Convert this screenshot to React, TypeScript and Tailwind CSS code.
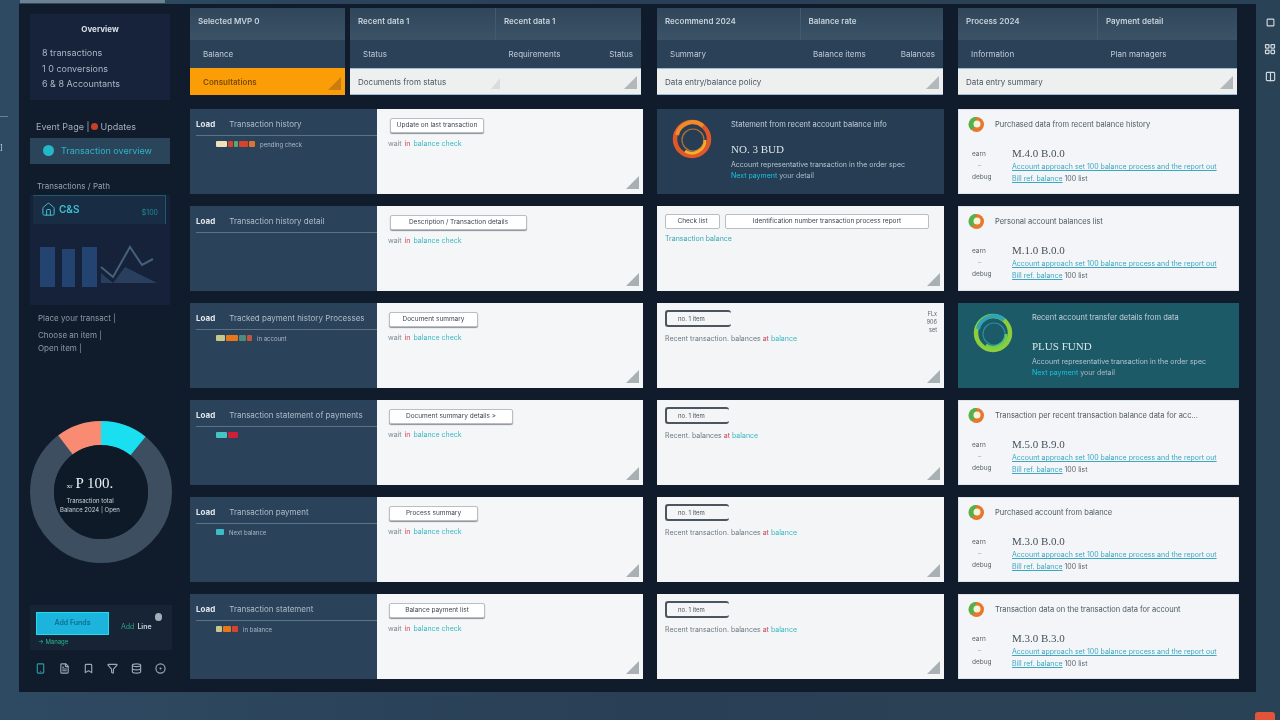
import React from "react";
import { Home, Smartphone, FileText, Bookmark, Filter, Database, CircleDot, Square, LayoutGrid, Columns2 } from "lucide-react";

const Corner = ({ c = "border-b-[#a9b0b4]" }: { c?: string }) => (
  <span className={`absolute right-[4px] bottom-[5px] w-0 h-0 border-l-[13px] border-l-transparent border-b-[13px] ${c}`} />
);

type HeadCell = { t: string; s: string[] };
const HeaderGroup = ({ cells, cls, foot, orange, mid }: { cells: HeadCell[]; cls: string; foot: string; orange?: boolean; mid?: boolean }) => (
  <div className={`${cls} flex flex-col`}>
    <div className="flex h-[32px] bg-gradient-to-b from-[#2f465b] to-[#3b5267]">
      {cells.map((c, i) => (
        <div key={i} className={`flex-1 pl-[8px] pt-[7px] text-[8px] font-semibold text-[#c8d2db] ${i > 0 ? "border-l border-[#445b6f]" : ""}`}>{c.t}</div>
      ))}
    </div>
    <div className="flex h-[28px] bg-[#2a4158]">
      {cells.map((c, i) => (
        <div key={i} className="flex-1 pl-[13px] pr-[8px] flex items-center justify-between text-[8px] text-[#c0ccd6]">
          {c.s.map((x, j) => <span key={j}>{x}</span>)}
        </div>
      ))}
    </div>
    <div className={`relative h-[27px] flex items-center pl-[8px] text-[8px] ${orange ? "bg-[#fb9d06] text-[#7c4a08] font-semibold pl-[13px]" : "bg-[#eef0f0] text-[#4b5560] border-y border-[#9fb8d4]"}`}>
      {foot}
      {mid && <span className="absolute left-[141px] bottom-[5px] w-0 h-0 border-l-[9px] border-l-transparent border-b-[11px] border-b-[#d9dcdc]" />}
      <Corner c={orange ? "border-b-[#c97c10]" : "border-b-[#b3b8ba]"} />
    </div>
  </div>
);

const chipsets = [
  ["bg-[#f0e2b8] w-[11px]", "bg-[#d8432e] w-[5px]", "bg-[#5aa77a] w-[4px]", "bg-[#d8432e] w-[9px]", "bg-[#e0722e] w-[6px]"],
  [],
  ["bg-[#c5c88a] w-[9px]", "bg-[#e8761a] w-[12px]", "bg-[#4d8a80] w-[7px]", "bg-[#c8553a] w-[5px]"],
  ["bg-[#45c4c4] w-[11px]", "bg-[#d01f3a] w-[10px]"],
  ["bg-[#3bbcc8] w-[8px]"],
  ["bg-[#c5c88a] w-[6px]", "bg-[#e8761a] w-[8px]", "bg-[#d8432e] w-[6px]"],
];

const rowsA = [
  { title: "Transaction history", chip: "Update on last transaction", w: "w-[94px]", ml: "ml-[13px]", tail: "pending check" },
  { title: "Transaction history detail", chip: "Description / Transaction details", w: "w-[137px]", ml: "ml-[13px]", tail: "" },
  { title: "Tracked payment history Processes", chip: "Document summary", w: "w-[89px]", ml: "ml-[12px]", tail: "in account" },
  { title: "Transaction statement of payments", chip: "Document summary details >", w: "w-[124px]", ml: "ml-[12px]", tail: "" },
  { title: "Transaction payment", chip: "Process summary", w: "w-[89px]", ml: "ml-[12px]", tail: "Next balance" },
  { title: "Transaction statement", chip: "Balance payment list", w: "w-[96px]", ml: "ml-[12px]", tail: "in balance" },
];

const CardA = ({ i }: { i: number }) => {
  const r = rowsA[i];
  return (
    <div className="flex h-[85px]">
      <div className="w-[187px] bg-[#2b435a] pl-[6px] pt-[10px] relative">
        <div className="flex text-[8px] leading-[10px] text-[#cfd8e0] whitespace-nowrap">
          <span className="font-bold mr-[14px] text-[#e2e8ee]">Load</span>
          <span className="text-[#aebcc8]">{r.title}</span>
        </div>
        <div className="h-px bg-[#5a7387] mt-[6px] mr-[-18px]" />
        <div className="flex items-center gap-[1px] pl-[20px] mt-[4px] h-[8px] text-[6px] text-[#a9b8c4]">
          {chipsets[i].map((c, j) => <span key={j} className={`h-[6px] rounded-[1px] ${c}`} />)}
          <span className="ml-[4px]">{r.tail}</span>
        </div>
      </div>
      <div className="flex-1 relative bg-[#f5f6f8] pt-[9px]">
        <div className={`${r.ml} ${r.w} h-[15px] flex items-center justify-center whitespace-nowrap bg-white border border-[#b9bec2] rounded-[2px] shadow-[0_1px_1px_#8a9298] text-[6.5px] text-[#3c4650]`}>{r.chip}</div>
        <div className="ml-[11px] mt-[7px] flex gap-[3px] text-[7px] leading-[8px]">
          <span className="text-[#7d8a90]">wait</span>
          <span className="text-[#d0405a]">in</span>
          <span className="text-[#39b8c4]">balance check</span>
        </div>
        <Corner />
      </div>
    </div>
  );
};

const RingLogo = ({ a, b, c, size = 42 }: { a: string; b: string; c: string; size?: number }) => (
  <svg width={size} height={size} viewBox="0 0 42 42" className="shrink-0">
    <circle cx="21" cy="21" r="17" fill="none" stroke={a} strokeWidth="4.5" />
    <path d="M6 17 A16 16 0 0 1 32 8" fill="none" stroke={b} strokeWidth="4" />
    <path d="M14 33 A13 13 0 0 0 34 22" fill="none" stroke={c} strokeWidth="3" />
    <circle cx="22" cy="22" r="11" fill="none" stroke={b} strokeWidth="1.2" opacity="0.7" />
  </svg>
);

const DarkFeature = ({ teal }: { teal?: boolean }) => (
  <div className={`h-[85px] flex pl-[14px] pr-[6px] pt-[6px] ${teal ? "bg-[#1c5a68]" : "bg-[#273d53]"}`}>
    <div className="mt-[3px] mr-[18px]">
      {teal ? <RingLogo a="#8ccf3c" b="#2fa3b8" c="#6fd04a" /> : <RingLogo a="#e2572a" b="#f08a2a" c="#f4b02c" />}
    </div>
    <div className="flex-1 min-w-0 whitespace-nowrap">
      <div className={`text-[7.5px] leading-[10px] text-[#c5d2dc] ${teal ? "mt-[4px]" : "mt-[5px]"}`}>{teal ? "Recent account transfer details from data" : "Statement from recent account balance info"}</div>
      <div className={`text-[11px] leading-[13px] text-[#dbe5ea] font-['Liberation_Serif',serif] ${teal ? "mt-[17px]" : "mt-[13px]"}`}>{teal ? "PLUS FUND" : "NO. 3 BUD"}</div>
      <div className="text-[7px] leading-[8px] text-[#b6c6d2] mt-[5px]">Account representative transaction in the order spec</div>
      <div className="text-[7px] leading-[8px] mt-[3px]"><span className="text-[#19c4dc]">Next payment </span><span className="text-[#a9bac6]">your detail</span></div>
    </div>
  </div>
);

const CardC = ({ title, value }: { title: string; value: string }) => (
  <div className="h-[85px] bg-[#f3f5f8] px-[9px] pt-[6px] border border-[#dfe4e8]">
    <div className="flex items-center gap-[10px] whitespace-nowrap">
      <svg width="17" height="17" viewBox="0 0 17 17" className="shrink-0">
        <circle cx="8.5" cy="8.5" r="7.5" fill="#e8762c" />
        <path d="M8.5 1 A7.5 7.5 0 0 0 3 14 L8 11 Z" fill="#58b04a" />
        <circle cx="9" cy="8" r="3.5" fill="#f8f2d8" />
      </svg>
      <span className="text-[7.5px] text-[#4d5862] overflow-hidden">{title}</span>
    </div>
    <div className="flex mt-[14px]">
      <div className="w-[44px] flex flex-col items-start pl-[4px] text-[6.5px] leading-[11.5px] text-[#5a656e]">
        <span className="mt-[2px]">earn</span>
        <span className="pl-[6px] text-[#9aa5ad]">–</span>
        <span>debug</span>
      </div>
      <div className="flex-1 min-w-0 whitespace-nowrap">
        <div className="text-[11px] leading-[13px] text-[#46525c] font-['Liberation_Serif',serif]">{value}</div>
        <div className="text-[7px] leading-[8px] text-[#3aa8c0] underline mt-[3px]">Account approach set 100 balance process and the report out</div>
        <div className="text-[7px] leading-[8px] mt-[4px]"><span className="text-[#3aa8c0] underline">Bill ref. balance</span><span className="text-[#5a656e]"> 100 list</span></div>
      </div>
    </div>
  </div>
);

const CardB = ({ right, w, line }: { right?: boolean; w: string; line: string }) => (
  <div className="h-[85px] relative bg-[#f3f5f6] pl-[8px] pt-[7px]">
    <div className={`${w} h-[17px] border-2 border-[#4c5660] rounded-[3px] border-r-0 flex items-center pl-[11px] text-[6px] text-[#4c5660]`}>no. 1 item</div>
    <div className="mt-[8px] text-[7px] leading-[8px] text-[#6c7a84]">{line} <span className="text-[#d0405a]">at</span> <span className="text-[#39b8c4]">balance</span></div>
    {right && (
      <div className="absolute right-[7px] top-[7px] text-[5.5px] leading-[8px] text-[#5a656e] text-right">
        <div>FLx</div><div>906</div><div>set</div>
      </div>
    )}
    <Corner />
  </div>
);

const Row2B = () => (
  <div className="h-[85px] relative bg-[#f3f5f6] pl-[8px] pt-[8px]">
    <div className="flex gap-[5px]">
      <div className="h-[15px] w-[55px] bg-white border border-[#b9bec2] rounded-[2px] flex items-center justify-center text-[6.5px] text-[#3c4650]">Check list</div>
      <div className="h-[15px] w-[204px] bg-white border border-[#b9bec2] rounded-[2px] flex items-center justify-center text-[6.5px] text-[#3c4650] whitespace-nowrap">Identification number transaction process report</div>
    </div>
    <div className="mt-[6px] text-[7px] leading-[8px] text-[#39a8b8]">Transaction balance</div>
    <Corner />
  </div>
);

const navIcons = [Smartphone, FileText, Bookmark, Filter, Database, CircleDot];

export default function App() {
  return (
    <div className="w-[1280px] h-[720px] overflow-hidden flex bg-gradient-to-r from-[#2e4a62] via-[#293f55] to-[#2a4256] font-['Inter',sans-serif] blur-[0.5px] relative">
      <span className="absolute left-[20px] top-0 w-[145px] h-[3px] bg-[#6c8292]" />
      <div className="w-[19px] shrink-0 flex flex-col text-[8px] text-[#8aa0b2] pt-[110px] gap-[19px]">
        <span>—</span>
        <span className="text-[#c8d3dc]">]</span>
      </div>

      <div className="w-[1237px] h-[688px] mt-[4px] bg-[#101c2b] flex shrink-0">
        {/* Sidebar */}
        <div className="w-[171px] shrink-0 pl-[11px] pr-[20px] pt-[10px] flex flex-col">
          <div className="w-[140px] h-[86px] bg-[#16233a] pt-[9px] text-[9px] text-[#aab7c4]">
            <div className="text-center font-bold text-[8px] text-[#d8e0e8]">Overview</div>
            <div className="pl-[12px] mt-[10px] leading-[15.5px] whitespace-nowrap">
              <div>8 transactions</div>
              <div>1 0 conversions</div>
              <div>6 & 8 Accountants</div>
            </div>
          </div>
          <div className="flex items-center mt-[20px] pl-[6px] text-[9px] text-[#a0aeba] whitespace-nowrap">
            Event Page | <span className="w-[7px] h-[7px] rounded-full bg-[#c8402a] mx-[2px]" />Updates
          </div>
          <div className="h-[26px] mt-[4px] bg-[#2a4559] flex items-center pl-[13px] gap-[7px] text-[9px] text-[#2fb4cc] whitespace-nowrap">
            <span className="w-[11px] h-[11px] rounded-full bg-[#23b8c8]" />Transaction overview
          </div>
          <div className="text-[8px] text-[#93a3b0] mt-[17px] pl-[7px] leading-[10px]">Transactions / Path</div>
          <div className="mt-[4px] h-[110px] bg-[#15223a] relative">
            <div className="ml-[3px] w-[133px] h-[29px] bg-[#182c44] border-t border-r border-[#1d5a6c] flex items-center justify-between pl-[8px] pr-[7px] text-[#3fc0d0]">
              <span className="flex items-center gap-[3px] text-[10px] font-semibold"><Home size={15} strokeWidth={1.6} />C&S</span>
              <span className="text-[7px] text-[#1f8c9c] mt-[8px]">$100</span>
            </div>
            <div className="flex items-end mt-[21px] pl-[10px]">
              <span className="w-[15px] h-[40px] bg-[#234470]" />
              <span className="w-[13px] h-[38px] bg-[#234470] ml-[7px]" />
              <span className="w-[15px] h-[40px] bg-[#234470] ml-[7px]" />
              <svg width="60" height="42" viewBox="0 0 60 42" className="ml-[2px]">
                <path d="M2 28 L14 38 L26 22 L58 38 L2 38 Z" fill="#2a3f5e" />
                <path d="M2 22 L14 32 L31 2 L43 20 L54 14" fill="none" stroke="#46607c" strokeWidth="2" />
              </svg>
            </div>
          </div>
          <div className="pl-[8px] mt-[7px] text-[8px] text-[#8c9aa8] whitespace-nowrap">
            <div>Place your transact |</div>
            <div className="mt-[5px] leading-[13px]">Choose an item |<br />Open item |</div>
          </div>

          <div className="mt-[66px] -ml-[10px] flex justify-center w-[162px]">
            <svg width="142" height="142" viewBox="0 0 142 142">
              <circle cx="71" cy="71" r="59" fill="none" stroke="#3c4e60" strokeWidth="24" />
              <path d="M71 12 A59 59 0 0 1 108 25" fill="none" stroke="#19dff0" strokeWidth="24" />
              <path d="M35.5 24 A59 59 0 0 1 71 12" fill="none" stroke="#f98b72" strokeWidth="24" />
              <circle cx="71" cy="71" r="47" fill="#0f1a28" />
            </svg>
          </div>
          <div className="relative">
            <div className="absolute left-0 right-0 -top-[89px] flex flex-col items-center -translate-x-[10px] text-[#c9d4dc]">
              <div className="text-[15px] leading-[18px] font-['Liberation_Serif',serif] text-[#e8eef2]"><span className="text-[7px] mr-[3px]">xr</span>P 100.</div>
              <div className="text-[6px] leading-[9px] mt-[1px]">Transaction total</div>
              <div className="text-[6px] leading-[9px]">Balance 2024 | Open</div>
            </div>
          </div>

          <div className="mt-[42px] w-[142px] h-[45px] bg-[#172435] pl-[6px] pt-[7px] relative">
            <div className="flex items-center">
              <div className="w-[73px] h-[23px] bg-[#1cb4dc] border border-[#19dff0] flex items-center justify-center text-[7px] font-semibold text-[#0f6d90]">Add Funds</div>
              <span className="ml-[12px] mt-[8px] text-[7px] text-[#2fa58a]">Add</span>
              <span className="ml-[3px] mt-[8px] text-[7px] text-[#c8d4dc] font-semibold">Line</span>
            </div>
            <span className="absolute right-[10px] top-[8px] w-[7px] h-[8px] rounded-full bg-[#9fb0ba]" />
            <div className="text-[6px] text-[#27b892] mt-[3px] leading-[8px] pl-[2px]">→ Manage</div>
          </div>
          <div className="flex mt-[13px] w-[136px] justify-between pl-[5px]">
            {navIcons.map((I, i) => <I key={i} size={11} className={i === 0 ? "text-[#2a9aa4]" : "text-[#9aa8b2]"} strokeWidth={2.5} />)}
          </div>
        </div>

        {/* Content */}
        <div className="flex-1 pt-[4px] min-w-0">
          <div className="grid grid-cols-[453px_287px_281px] gap-x-[14px]">
            <div className="flex gap-[5px] w-[451px]">
              <HeaderGroup cls="w-[155px]" orange foot="Consultations" cells={[{ t: "Selected MVP 0", s: ["Balance"] }]} />
              <HeaderGroup cls="flex-1" mid foot="Documents from status" cells={[{ t: "Recent data 1", s: ["Status"] }, { t: "Recent data 1", s: ["Requirements", "Status"] }]} />
            </div>
            <HeaderGroup cls="w-[286px]" foot="Data entry/balance policy" cells={[{ t: "Recommend 2024", s: ["Summary"] }, { t: "Balance rate", s: ["Balance items", "Balances"] }]} />
            <HeaderGroup cls="w-[279px]" foot="Data entry summary" cells={[{ t: "Process 2024", s: ["Information"] }, { t: "Payment detail", s: ["Plan managers"] }]} />
          </div>
          <div className="grid grid-cols-[453px_287px_281px] gap-x-[14px] gap-y-[12px] mt-[14px]">
            <CardA i={0} />
            <DarkFeature />
            <CardC title="Purchased data from recent balance history" value="M.4.0 B.0.0" />

            <CardA i={1} />
            <Row2B />
            <CardC title="Personal account balances list" value="M.1.0 B.0.0" />

            <CardA i={2} />
            <CardB right w="w-[66px]" line="Recent transaction. balances" />
            <DarkFeature teal />

            <CardA i={3} />
            <CardB w="w-[64px]" line="Recent. balances" />
            <CardC title="Transaction per recent transaction balance data for acc..." value="M.5.0 B.9.0" />

            <CardA i={4} />
            <CardB w="w-[64px]" line="Recent transaction. balances" />
            <CardC title="Purchased account from balance" value="M.3.0 B.0.0" />

            <CardA i={5} />
            <CardB w="w-[64px]" line="Recent transaction. balances" />
            <CardC title="Transaction data on the transaction data for account" value="M.3.0 B.3.0" />
          </div>
        </div>
      </div>

      <div className="flex-1 flex flex-col items-center pl-[4px] pt-[18px] gap-[16px] text-[#d0d8de]">
        <Square size={9} strokeWidth={3} />
        <LayoutGrid size={12} strokeWidth={2.5} />
        <Columns2 size={11} strokeWidth={2.5} />
      </div>
      <span className="absolute right-[5px] bottom-0 w-[20px] h-[8px] rounded-t-[3px] bg-[#e2543a]" />
    </div>
  );
}
